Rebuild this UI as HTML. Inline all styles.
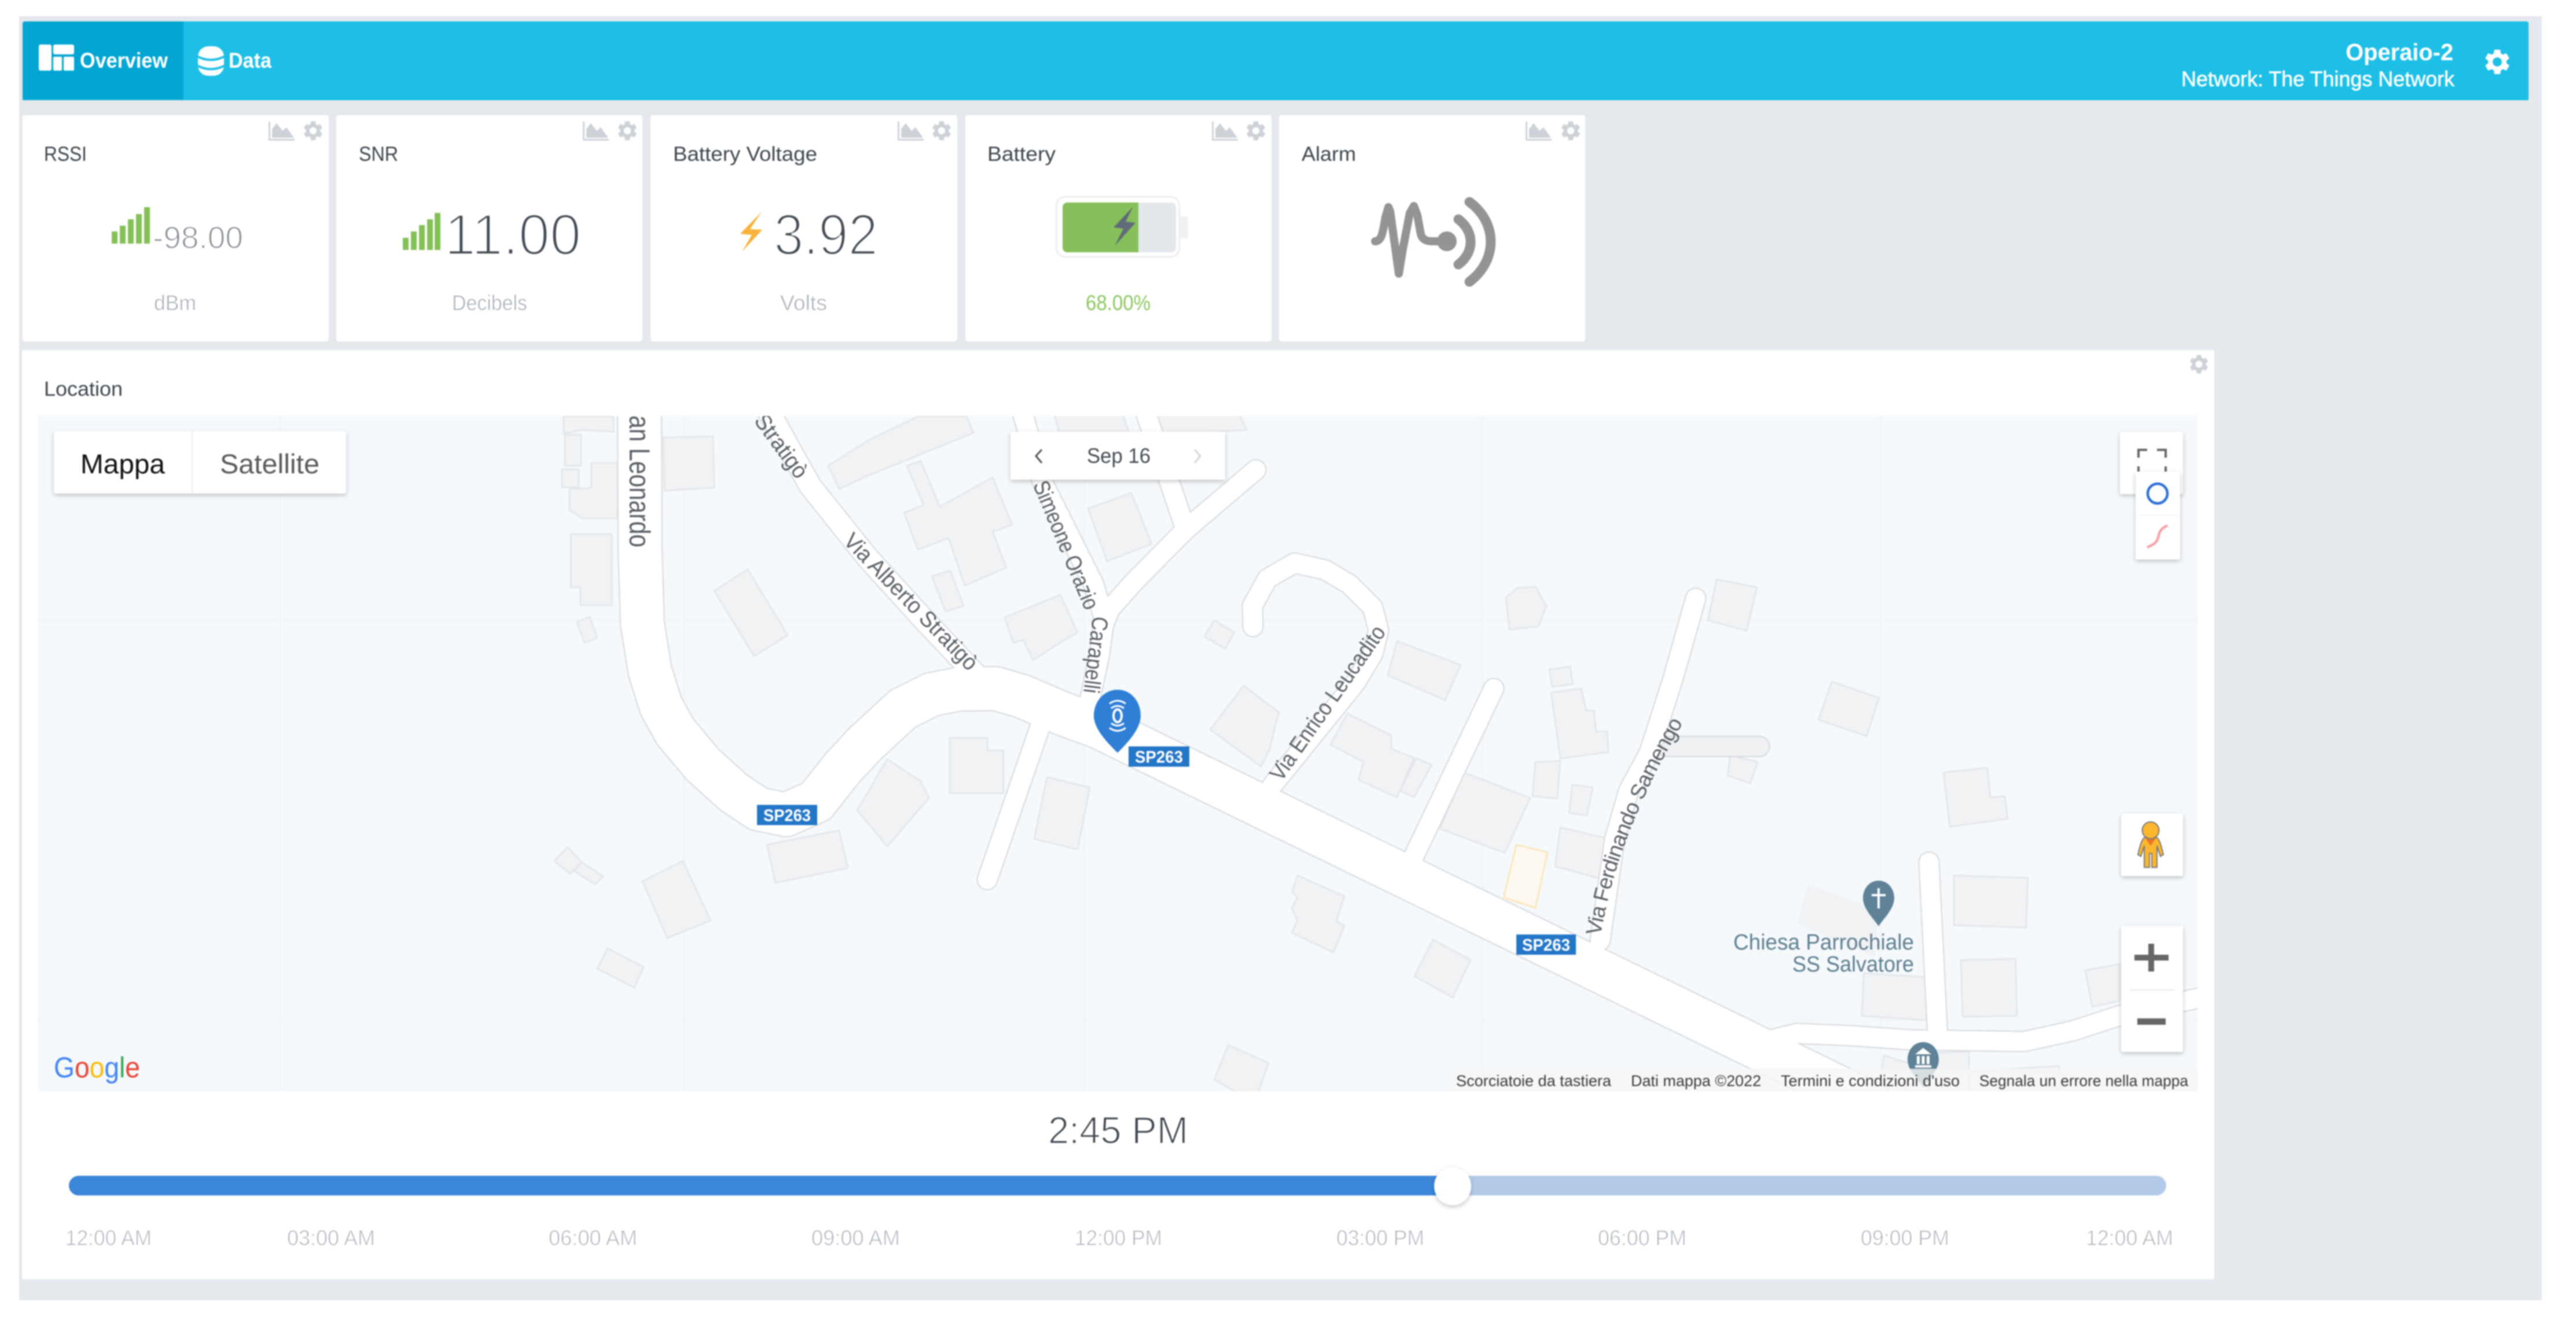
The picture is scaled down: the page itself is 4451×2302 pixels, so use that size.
<!DOCTYPE html>
<html lang="it"><head><meta charset="utf-8"><title>Operaio-2</title>
<style>
html,body{margin:0;padding:0;background:#fff;width:4451px;height:2302px;overflow:hidden}
svg{display:block}
text{font-family:"Liberation Sans",sans-serif}
.b polygon{fill:#f1f2f4;stroke:#e3e5e8;stroke-width:2.5;stroke-linejoin:round}
.t{font-size:35px;fill:#3f464e}
.u{font-size:37px;fill:#a9afb8;stroke:#fff;stroke-width:.7}
.h{font-size:37px;fill:#aab0b9;stroke:#fff;stroke-width:1.1}
.l{font-size:39px;fill:#5a5f66}
.a{font-size:27px;fill:#3d3d3d}
.sp{font-size:29px;font-weight:700;fill:#fff}
.n{fill:#434a52;stroke:#fff;stroke-width:3.8}
.ic{fill:#cdd2d8}
</style></head><body>
<svg xmlns="http://www.w3.org/2000/svg" width="4451" height="2302" viewBox="0 0 4451 2302">
<defs>
<clipPath id="mc"><rect x="65" y="719" width="3732" height="1167"/></clipPath>
<filter id="sh" x="-20%" y="-20%" width="140%" height="150%"><feDropShadow dx="0" dy="3" stdDeviation="4" flood-color="#000" flood-opacity=".22"/></filter>
<symbol id="gear" viewBox="2.5 2 19 20"><path d="M19.14 12.94c.04-.3.06-.61.06-.94 0-.32-.02-.64-.07-.94l2.03-1.58c.18-.14.23-.41.12-.61l-1.92-3.32c-.12-.22-.37-.29-.59-.22l-2.39.96c-.5-.38-1.03-.7-1.62-.94l-.36-2.54c-.04-.24-.24-.41-.48-.41h-3.84c-.24 0-.43.17-.47.41l-.36 2.54c-.59.24-1.13.57-1.62.94l-2.39-.96c-.22-.08-.47 0-.59.22L2.74 8.87c-.12.21-.08.47.12.61l2.03 1.58c-.05.3-.09.63-.09.94s.02.64.07.94l-2.03 1.58c-.18.14-.23.41-.12.61l1.92 3.32c.12.22.37.29.59.22l2.39-.96c.5.38 1.03.7 1.62.94l.36 2.54c.05.24.24.41.48.41h3.84c.24 0 .44-.17.47-.41l.36-2.54c.59-.24 1.13-.56 1.62-.94l2.39.96c.22.08.47 0 .59-.22l1.92-3.32c.12-.22.07-.47-.12-.61l-2.01-1.58zM12 15.6c-1.98 0-3.6-1.62-3.6-3.6s1.62-3.6 3.6-3.6 3.6 1.62 3.6 3.6-1.62 3.6-3.6 3.6z" fill-rule="evenodd"/></symbol>
<symbol id="chart" viewBox="0 0 45 33"><path d="M0 0h3v30h42v3H0z"/><path d="M6 28V13L14 3l10 13 7-6 13 18z"/></symbol>
<g id="rw75"><polyline points="1105,700 1106,950 1110,1078 1123,1159 1142,1220 1167,1265 1215,1322 1268,1370 1310,1398 1358,1408 1410,1385 1455,1328 1495,1285 1560,1225 1610,1200 1657,1191 1720,1190 1765,1203 1835,1233 1900,1257 2000,1306 3000,1793 3230,1905"/></g>
<g id="rw36">
<polyline points="3000,1793 3060,1797 3105,1786 3200,1790 3300,1797 3497,1800 3580,1782 3663,1755 3830,1718"/>
<polyline points="1763,700 1800,830 1890,1010 1908,1070 1900,1130 1882,1215"/>
<polyline points="2170,812 2050,914 1960,1005 1918,1052 1905,1085"/>
<polyline points="1975,700 2045,904"/>
<polyline points="2165,1083 2164,1047 2190,1000 2237,973 2290,985 2332,1010 2372,1050 2382,1090 2372,1130 2342,1180 2198,1358"/>
<polyline points="2581,1190 2443,1480"/>
<polyline points="2930,1034 2891,1172 2850,1300 2814,1367 2790,1450 2765,1625"/>
<polyline points="1797,1256 1706,1520"/>
<polyline points="3333,1490 3348,1790"/>
</g>
<g id="rw40"><polyline points="1322,700 1400,840 1500,965 1600,1075 1690,1170"/></g>
<path id="sam" d="M2765 1618C2782 1530 2797 1480 2831 1400S2892 1280 2907 1250L2950 1160"/>
</defs>
<g style="filter:blur(1.1px)">
<rect width="4451" height="2302" fill="#fff"/>
<rect x="33" y="28" width="4359" height="2219" fill="#e5e8ec"/>
<!-- header -->
<rect x="39" y="37" width="4330" height="136" rx="4" fill="#1dbfe6"/>
<rect x="39" y="171" width="4330" height="2" fill="#08bfea"/>
<path d="M43 37H317V173H43a4 4 0 0 1-4-4V41a4 4 0 0 1 4-4z" fill="#03a5d2"/>
<g fill="#fff"><rect x="67" y="77" width="22" height="45" rx="3"/><rect x="92" y="77" width="36" height="17" rx="3"/><rect x="92" y="98" width="15" height="24" rx="2"/><rect x="110" y="98" width="18" height="24" rx="2"/>
<rect x="342" y="80" width="45" height="51" rx="18"/></g>
<g fill="none" stroke="#1dbfe6" stroke-width="4"><path d="M340 97Q364 110 389 97"/><path d="M340 113Q364 126 389 113"/></g>
<text x="138" y="117" font-size="37" font-weight="700" fill="#fff" textLength="152" lengthAdjust="spacingAndGlyphs">Overview</text>
<text x="395" y="117" font-size="37" font-weight="700" fill="#fff" textLength="74" lengthAdjust="spacingAndGlyphs">Data</text>
<text x="4053" y="104" font-size="41" font-weight="700" fill="#fff" textLength="186" lengthAdjust="spacingAndGlyphs">Operaio-2</text>
<text x="3769" y="149" font-size="37" fill="#fff" stroke="#fff" stroke-width=".6" textLength="472" lengthAdjust="spacingAndGlyphs">Network: The Things Network</text>
<use href="#gear" x="4293" y="85" width="44" height="44" fill="#fff"/>
<!-- cards -->
<g fill="#fff"><rect x="39" y="199" width="529" height="391" rx="4"/><rect x="581" y="199" width="529" height="391" rx="4"/><rect x="1124" y="199" width="530" height="391" rx="4"/><rect x="1668" y="199" width="529" height="391" rx="4"/><rect x="2210" y="199" width="529" height="391" rx="4"/></g>
<g class="ic">
<use href="#chart" x="464" y="210" width="45" height="33"/><use href="#gear" x="524" y="209" width="34" height="34"/>
<use href="#chart" x="1007" y="210" width="45" height="33"/><use href="#gear" x="1067" y="209" width="34" height="34"/>
<use href="#chart" x="1551" y="210" width="45" height="33"/><use href="#gear" x="1610" y="209" width="34" height="34"/>
<use href="#chart" x="2094" y="210" width="45" height="33"/><use href="#gear" x="2153" y="209" width="34" height="34"/>
<use href="#chart" x="2636" y="210" width="45" height="33"/><use href="#gear" x="2697" y="209" width="34" height="34"/>
</g>
<text class="t" x="76" y="278" textLength="74" lengthAdjust="spacingAndGlyphs">RSSI</text>
<text class="t" x="620" y="278" textLength="68" lengthAdjust="spacingAndGlyphs">SNR</text>
<text class="t" x="1163" y="278" textLength="249" lengthAdjust="spacingAndGlyphs">Battery Voltage</text>
<text class="t" x="1706" y="278" textLength="118" lengthAdjust="spacingAndGlyphs">Battery</text>
<text class="t" x="2249" y="278" textLength="94" lengthAdjust="spacingAndGlyphs">Alarm</text>
<!-- rssi -->
<g fill="#84c058"><rect x="193" y="400" width="10" height="21"/><rect x="207" y="390" width="10" height="31"/><rect x="221" y="379" width="10" height="42"/><rect x="235" y="370" width="10" height="51"/><rect x="249" y="358" width="10" height="63"/>
<rect x="696" y="411" width="10" height="21"/><rect x="710" y="400" width="10" height="32"/><rect x="724" y="389" width="10" height="43"/><rect x="738" y="379" width="10" height="53"/><rect x="751" y="368" width="10" height="64"/></g>
<text x="264" y="429" font-size="54" fill="#858b93" stroke="#fff" stroke-width="1.7" textLength="156" lengthAdjust="spacingAndGlyphs">-98.00</text>
<text class="n" x="768" y="440" font-size="100" textLength="236" lengthAdjust="spacingAndGlyphs">11.00</text>
<polygon points="1316,366 1279,404 1299,406 1282,435 1317,397 1296,396" fill="#f9b23a"/>
<text class="n" x="1337" y="440" font-size="100" textLength="180" lengthAdjust="spacingAndGlyphs">3.92</text>
<text class="u" x="266" y="536" textLength="73" lengthAdjust="spacingAndGlyphs">dBm</text>
<text class="u" x="781" y="536" textLength="130" lengthAdjust="spacingAndGlyphs">Decibels</text>
<text class="u" x="1348" y="536" textLength="81" lengthAdjust="spacingAndGlyphs">Volts</text>
<text x="1876" y="536" font-size="37" fill="#8cc65f" textLength="112" lengthAdjust="spacingAndGlyphs">68.00%</text>
<!-- battery -->
<rect x="1825" y="340" width="213" height="104" rx="16" fill="#fff" stroke="#eceef1" stroke-width="3"/>
<rect x="2038" y="374" width="15" height="38" rx="5" fill="#eff1f3"/>
<rect x="1836" y="350" width="196" height="86" rx="8" fill="#e4e8ec"/>
<path d="M1844 350H1967V436H1844a8 8 0 0 1-8-8V358a8 8 0 0 1 8-8z" fill="#86c05a"/>
<polygon points="1958,357 1924,393 1941,395 1926,425 1962,385 1945,383" fill="#5f6b78"/>
<!-- alarm -->
<g fill="none" stroke="#949494" stroke-linecap="round" stroke-linejoin="round">
<path d="M2376 417C2389 417 2390 395 2394 375L2399 358L2402 365L2417 473L2424 430L2436 368L2443 356L2449 372L2455 405C2458 415 2466 417 2476 417H2500" stroke-width="14"/>
<path d="M2520 379C2548 400 2548 436 2520 457" stroke-width="17"/>
<path d="M2539 349C2588 385 2588 450 2539 487" stroke-width="17"/>
</g>
<circle cx="2500" cy="417" r="17" fill="#949494"/>
<!-- location panel -->
<rect x="38" y="605" width="3788" height="1606" rx="3" fill="#fff"/>
<text class="t" x="76" y="684" textLength="136" lengthAdjust="spacingAndGlyphs">Location</text>
<use href="#gear" x="3783" y="613" width="33" height="33" fill="#cdd2d8"/>
<!-- map -->
<g clip-path="url(#mc)">
<rect x="65" y="719" width="3732" height="1167" fill="#f5f9fc"/>
<g stroke="#f0f3f6" stroke-width="2"><path d="M483 719V1886M1182 719V1886M1873 719V1886M2562 719V1886M3249 719V1886M65 1072H3797M65 1763H3797"/></g>
<g class="b">
<polygon points="974,720 1060,720 1060,746 1005,743 974,750"/>
<polygon points="976,751 1004,751 1004,805 976,805"/>
<polygon points="971,811 1000,811 1000,842 971,842"/>
<polygon points="1022,800 1067,800 1067,896 1005,896 984,881 984,845 1022,843"/>
<polygon points="1146,756 1232,754 1234,843 1148,848"/>
<polygon points="986,923 1057,923 1057,1046 1003,1046 1003,1015 986,1015"/>
<polygon points="997,1075 1019,1066 1032,1102 1010,1111"/>
<polygon points="1292,984 1361,1098 1303,1134 1234,1021"/>
<polygon points="1431,805 1500,761 1586,720 1670,720 1682,748 1500,822 1450,845"/>
<polygon points="1562,886 1586,950 1639,930 1667,1012 1739,981 1715,919 1749,907 1715,825 1624,876 1591,797 1567,805 1596,873"/>
<polygon points="1610,996 1642,986 1665,1047 1634,1057"/>
<polygon points="1880,879 1955,852 1990,940 1913,970"/>
<polygon points="1821,715 1940,715 1950,746 1830,746"/>
<polygon points="1998,715 2141,715 2154,743 2007,751"/>
<polygon points="1736,1067 1832,1028 1862,1093 1823,1116 1785,1141 1768,1106 1751,1111"/>
<polygon points="2081,1100 2098,1072 2133,1093 2117,1121"/>
<polygon points="2602,1032 2622,1016 2653,1014 2672,1047 2658,1083 2608,1088"/>
<polygon points="2966,1001 3036,1015 3018,1090 2951,1072"/>
<polygon points="2414,1108 2524,1149 2497,1210 2398,1167"/>
<polygon points="2677,1157 2713,1152 2718,1182 2682,1187"/>
<polygon points="2680,1197 2732,1190 2741,1228 2754,1228 2758,1264 2777,1264 2779,1300 2696,1311"/>
<polygon points="2149,1185 2210,1231 2203,1256 2194,1294 2179,1325 2091,1261"/>
<polygon points="2328,1233 2404,1271 2404,1294 2443,1310 2414,1378 2347,1348 2356,1317 2299,1287"/>
<polygon points="2447,1310 2474,1322 2443,1378 2419,1366"/>
<polygon points="2529,1335 2644,1379 2600,1474 2488,1432"/>
<polygon points="2653,1317 2696,1315 2691,1380 2648,1376"/>
<polygon points="2717,1356 2752,1361 2742,1409 2711,1405"/>
<polygon points="2696,1430 2782,1450 2763,1518 2687,1497"/>
<polygon points="1641,1275 1706,1275 1706,1297 1734,1297 1734,1371 1641,1371"/>
<polygon points="1809,1343 1883,1361 1862,1468 1787,1450"/>
<polygon points="1533,1312 1591,1350 1605,1379 1533,1463 1481,1400"/>
<polygon points="1325,1460 1450,1435 1465,1500 1340,1526"/>
<polygon points="981,1464 1005,1490 985,1510 958,1488"/>
<polygon points="1005,1490 1043,1515 1028,1528 992,1505"/>
<polygon points="1110,1523 1180,1488 1228,1591 1153,1621"/>
<polygon points="1050,1639 1112,1671 1096,1707 1032,1674"/>
<polygon points="2242,1513 2323,1549 2309,1592 2323,1600 2304,1646 2232,1612 2242,1590 2232,1570 2242,1551 2232,1541"/>
<polygon points="2476,1624 2541,1659 2510,1724 2444,1687"/>
<polygon points="2122,1806 2192,1837 2173,1890 2141,1890 2098,1866"/>
<polygon points="3165,1178 3247,1206 3225,1272 3142,1244"/>
<polygon points="2990,1305 3037,1317 3024,1354 2985,1340"/>
<polygon points="3358,1335 3434,1327 3439,1378 3464,1376 3469,1415 3369,1429"/>
<polygon points="3376,1513 3504,1517 3501,1603 3376,1599"/>
<polygon points="3124,1529 3217,1562 3245,1580 3239,1654 3105,1597" style="stroke:none"/>
<polygon points="3220,1682 3333,1689 3328,1763 3217,1756"/>
<polygon points="3388,1659 3483,1657 3485,1756 3391,1757"/>
<polygon points="3603,1677 3663,1666 3663,1730 3615,1740"/>
<polygon points="3255,1824 3306,1840 3290,1890 3246,1890"/>
<polygon points="3332,1820 3402,1817 3402,1890 3332,1890"/>
<polygon points="3402,1852 3558,1842 3561,1890 3405,1890"/>
<polygon points="2620,1460 2674,1473 2653,1569 2598,1551" style="fill:#fdf9f0;stroke:#fbe4b2"/>
</g>
<polyline points="2880,1290 3040,1290" fill="none" stroke="#d6d9dd" stroke-width="37" stroke-linecap="round"/>
<polyline points="2880,1290 3040,1290" fill="none" stroke="#eff1f3" stroke-width="33" stroke-linecap="round"/>
<g fill="none" stroke-linecap="round" stroke-linejoin="round">
<use href="#rw75" stroke="#d6d9dd" stroke-width="78"/>
<use href="#rw36" stroke="#d6d9dd" stroke-width="37"/>
<use href="#rw40" stroke="#d6d9dd" stroke-width="41"/>
<use href="#rw75" stroke="#fff" stroke-width="74"/>
<use href="#rw36" stroke="#fff" stroke-width="33"/>
<use href="#rw40" stroke="#fff" stroke-width="37"/>
</g>
<!-- road labels -->
<g class="lb">
<text transform="translate(1088,946) rotate(90)" x="-228" y="0" font-size="50" fill="#5a5f66" textLength="228" lengthAdjust="spacingAndGlyphs">an Leonardo</text>
<text class="l" transform="translate(1350,771) rotate(53.7)" text-anchor="middle" y="13" textLength="127" lengthAdjust="spacingAndGlyphs">Stratigò</text>
<text class="l" transform="translate(1574,1040) rotate(45.8)" text-anchor="middle" y="13" textLength="313" lengthAdjust="spacingAndGlyphs">Via Alberto Stratigò</text>
<text class="l" transform="translate(1842,942) rotate(67.4)" text-anchor="middle" y="13" textLength="237" lengthAdjust="spacingAndGlyphs">Simeone Orazio</text>
<text class="l" transform="translate(1893,1132) rotate(97)" text-anchor="middle" y="13" textLength="133" lengthAdjust="spacingAndGlyphs">Carapelli</text>
<text class="l" transform="translate(2294,1215) rotate(-55)" text-anchor="middle" y="13" textLength="317" lengthAdjust="spacingAndGlyphs">Via Enrico Leucadito</text>
<text style="font-size:37px;letter-spacing:-1px" fill="#5a5f66"><textPath href="#sam" startOffset="0">Via Ferdinando Samengo</textPath></text>
</g>
<!-- shields -->
<rect x="1308" y="1391" width="104" height="35" fill="#2476c7"/><text class="sp" x="1319" y="1419" textLength="82" lengthAdjust="spacingAndGlyphs">SP263</text>
<rect x="1950" y="1290" width="105" height="35" fill="#2476c7"/><text class="sp" x="1961" y="1318" textLength="83" lengthAdjust="spacingAndGlyphs">SP263</text>
<rect x="2620" y="1615" width="103" height="35" fill="#2476c7"/><text class="sp" x="2630" y="1643" textLength="83" lengthAdjust="spacingAndGlyphs">SP263</text>
<!-- blue pin -->
<path d="M1931 1192C1908 1192 1890 1212 1890 1237C1890 1262 1920 1290 1931 1301C1942 1290 1971 1262 1971 1237C1971 1212 1954 1192 1931 1192z" fill="#2f7fd6"/>
<ellipse cx="1931" cy="1237" rx="7" ry="11" fill="none" stroke="#fff" stroke-width="4"/>
<g fill="none" stroke="#fff" stroke-width="3"><path d="M1920 1224Q1931 1216 1942 1224"/><path d="M1917 1216Q1931 1206 1945 1216"/><path d="M1920 1250Q1931 1258 1942 1250"/><path d="M1917 1258Q1931 1268 1945 1258"/></g>
<!-- POI -->
<path d="M3246 1522C3229 1522 3219 1537 3219 1552C3219 1572 3240 1590 3246 1601C3252 1590 3273 1572 3273 1552C3273 1537 3263 1522 3246 1522z" fill="#5f8297"/>
<path d="M3244 1535h4v10h10v4h-10v21h-4v-21h-10v-4h10z" fill="#fff"/>
<text x="2995" y="1641" font-size="38" fill="#5f7f8f" textLength="312" lengthAdjust="spacingAndGlyphs">Chiesa Parrochiale</text>
<text x="3097" y="1679" font-size="38" fill="#5f7f8f" textLength="210" lengthAdjust="spacingAndGlyphs">SS Salvatore</text>
<path d="M3323 1801C3306 1801 3296 1816 3296 1831C3296 1851 3317 1869 3323 1880C3329 1869 3350 1851 3350 1831C3350 1816 3340 1801 3323 1801z" fill="#5f8297"/>
<path d="M3309 1822L3323 1811 3337 1822zM3312 1825h5v14h-5zM3320.500 1825h5v14h-5zM3329 1825h5v14h-5zM3309 1841h28v4h-28z" fill="#fff"/>
<!-- attribution -->
<rect x="2503" y="1847" width="1294" height="39" fill="#f6f6f6" opacity=".8"/>
<text class="a" x="2516" y="1877" textLength="268" lengthAdjust="spacingAndGlyphs">Scorciatoie da tastiera</text>
<text class="a" x="2818" y="1877" textLength="225" lengthAdjust="spacingAndGlyphs">Dati mappa ©2022</text>
<text class="a" x="3077" y="1877" textLength="309" lengthAdjust="spacingAndGlyphs">Termini e condizioni d'uso</text>
<text class="a" x="3420" y="1877" textLength="361" lengthAdjust="spacingAndGlyphs">Segnala un errore nella mappa</text>
<text x="93" y="1862" font-size="50" textLength="149" lengthAdjust="spacingAndGlyphs"><tspan fill="#4285f4">G</tspan><tspan fill="#ea4335">o</tspan><tspan fill="#fbbc05">o</tspan><tspan fill="#4285f4">g</tspan><tspan fill="#34a853">l</tspan><tspan fill="#ea4335">e</tspan></text>
</g>
<!-- map controls -->
<g filter="url(#sh)"><rect x="93" y="745" width="505" height="108" rx="3" fill="#fff"/></g>
<rect x="331" y="745" width="2" height="108" fill="#eceeef"/>
<text x="139" y="818" font-size="47" fill="#111" textLength="146" lengthAdjust="spacingAndGlyphs">Mappa</text>
<text x="380" y="818" font-size="47" fill="#5a5a5a" textLength="172" lengthAdjust="spacingAndGlyphs">Satellite</text>
<g filter="url(#sh)"><rect x="1746" y="746" width="371" height="83" rx="2" fill="#fff"/></g>
<path d="M1800 777L1790 788 1800 800" fill="none" stroke="#555" stroke-width="3"/>
<path d="M2064 777L2074 788 2064 800" fill="none" stroke="#d3d6da" stroke-width="3"/>
<text x="1878" y="800" font-size="36" fill="#454c54" textLength="110" lengthAdjust="spacingAndGlyphs">Sep 16</text>
<g filter="url(#sh)"><rect x="3663" y="746" width="109" height="108" rx="3" fill="#fff"/></g>
<path d="M3695 791V777.500H3710M3727 777.500H3742V791M3695 806V822M3742 806V822" fill="none" stroke="#666" stroke-width="4"/>
<g filter="url(#sh)"><rect x="3690" y="815" width="77" height="152" rx="3" fill="#fff"/></g>
<rect x="3693" y="890" width="71" height="1" fill="#eee"/>
<circle cx="3728" cy="853" r="17" fill="none" stroke="#2f6fd6" stroke-width="4.500"/>
<path d="M3710 946C3725 940 3728 935 3730 925C3732 915 3738 912 3745 908" fill="none" stroke="#f6a3ab" stroke-width="4.500"/>
<g filter="url(#sh)"><rect x="3665" y="1406" width="107" height="108" rx="3" fill="#fff"/></g>
<path d="M3706 1447H3726C3732 1450 3735 1465 3738 1477L3733 1480 3727 1462V1499H3718V1475H3714V1499H3705V1462L3699 1480 3694 1477C3697 1465 3700 1450 3706 1447z" fill="#fcb72f" stroke="#7a7a7a" stroke-width="2"/>
<path d="M3706 1447H3726L3716 1462z" fill="#e8772a"/>
<circle cx="3716" cy="1435" r="14.500" fill="#fcb72f" stroke="#7a7a7a" stroke-width="2"/>
<g filter="url(#sh)"><rect x="3665" y="1600" width="107" height="218" rx="3" fill="#fff"/></g>
<rect x="3679" y="1710" width="79" height="1.500" fill="#e6e6e6"/>
<path d="M3712 1631h10v19h25v10h-25v19h-10v-19h-24v-10h24z" fill="#666"/>
<rect x="3693" y="1760" width="49" height="11" fill="#666"/>
<!-- time / slider -->
<text x="1811" y="1976" font-size="66" fill="#3f464e" stroke="#fff" stroke-width="1.8" textLength="242" lengthAdjust="spacingAndGlyphs">2:45 PM</text>
<rect x="119" y="2032" width="3624" height="34" rx="17" fill="#b3cae8"/>
<path d="M136 2032H2511V2066H136a17 17 0 0 1 0-34z" fill="#3b86d9"/>
<g filter="url(#sh)"><ellipse cx="2510" cy="2050" rx="32" ry="33" fill="#fff"/></g>
<g class="tm">
<text class="h" x="113" y="2152" textLength="149" lengthAdjust="spacingAndGlyphs">12:00 AM</text>
<text class="h" x="496" y="2152" textLength="152" lengthAdjust="spacingAndGlyphs">03:00 AM</text>
<text class="h" x="948" y="2152" textLength="153" lengthAdjust="spacingAndGlyphs">06:00 AM</text>
<text class="h" x="1402" y="2152" textLength="153" lengthAdjust="spacingAndGlyphs">09:00 AM</text>
<text class="h" x="1857" y="2152" textLength="151" lengthAdjust="spacingAndGlyphs">12:00 PM</text>
<text class="h" x="2309" y="2152" textLength="152" lengthAdjust="spacingAndGlyphs">03:00 PM</text>
<text class="h" x="2761" y="2152" textLength="153" lengthAdjust="spacingAndGlyphs">06:00 PM</text>
<text class="h" x="3215" y="2152" textLength="153" lengthAdjust="spacingAndGlyphs">09:00 PM</text>
<text class="h" x="3604" y="2152" textLength="151" lengthAdjust="spacingAndGlyphs">12:00 AM</text>
</g>
</g>
</svg>
</body></html>
